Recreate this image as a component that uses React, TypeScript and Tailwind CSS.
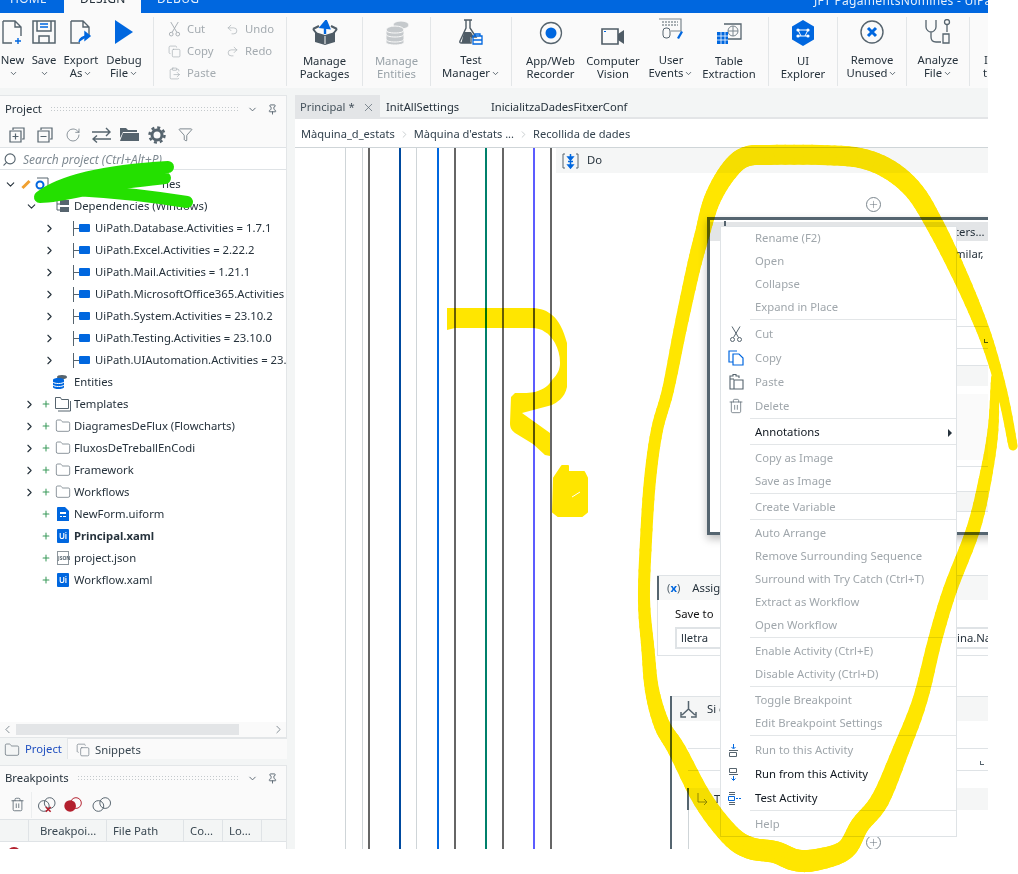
import { ChevronDown, ChevronRight, ChevronLeft, Pin, Plus, RotateCw, Search, X, Trash2, Undo2, Redo2, Copy, ClipboardPaste, Folder, Filter } from "lucide-react";
import type { ReactNode } from "react";

const Sep = () => <div className="w-px h-[69px] bg-[#e3e6e8] mt-[4px] shrink-0" />;

const IconDoc = ({ children }: { children?: ReactNode }) => (
  <svg width="24" height="26" viewBox="0 0 24 26" fill="none" stroke="#56646e" strokeWidth="1.4">
    <path d="M2 2h12l6 6v9M14 2v6h6M2 2v22h9" />
    {children}
  </svg>
);

const Scis = ({ color }: { color: string }) => (
  <svg width="14" height="16" viewBox="0 0 14 16" fill="none" stroke={color} strokeWidth="1">
    <path d="M3 .5l6.500 11M11 .5L4.500 11.500" />
    <circle cx="3.500" cy="13.500" r="2" />
    <circle cx="10.500" cy="13.500" r="2" />
  </svg>
);

const Dots = () => (
  <div className="flex-1 h-[6px] mx-[8px] bg-[radial-gradient(#c4c9cc_0.7px,transparent_0.8px)] bg-[length:3px_3px]" />
);

const Caret = () => <ChevronDown className="inline-block w-[9px] h-[9px] text-[#33424e] ml-[1px]" strokeWidth={2} />;

// big ribbon button, fixed width so the columns land where the screenshot has them
const BigButton = ({ w, icon, one, two, caret, off, top = "pt-[2px]" }: { w: string; icon: ReactNode; one: string; two?: string; caret?: boolean; off?: boolean; top?: string }) => (
  <div className={`${w} shrink-0 flex flex-col items-center ${top} ${off ? "text-[#9aa3a9]" : "text-[#26323c]"}`}>
    <div className="h-[34px] flex items-center justify-center">{icon}</div>
    <div className="text-[11.3px] leading-[13px] mt-[4px] text-center whitespace-nowrap">{one}</div>
    <div className="text-[11.3px] leading-[13px] text-center whitespace-nowrap h-[13px]">
      {two}
      {caret && <Caret />}
    </div>
  </div>
);

const SmallAction = ({ icon, label }: { icon: ReactNode; label: string }) => (
  <div className="h-[22px] flex items-center gap-[6px] text-[11.3px] text-[#a4abb0]">
    <span className="w-[13px] flex justify-center">{icon}</span>
    {label}
  </div>
);

const Ribbon = () => (
  <div className="h-[75px] bg-[#fafafa] flex shrink-0 overflow-hidden">
    <BigButton w="w-[25px]" one="New" caret icon={<IconDoc><path d="M17 19v6M14 22h6" stroke="#0067df" /></IconDoc>} />
    <BigButton w="w-[38px]" one="Save" caret icon={
      <svg width="24" height="24" viewBox="0 0 24 24" fill="none" stroke="#56646e" strokeWidth="1.5">
        <path d="M1 1h22v22H1zM5 1v10h14V1M7 23v-7h10v7" />
        <path d="M8 4h8M8 7h8" stroke="#0067df" />
      </svg>
    } />
    <BigButton w="w-[36px]" one="Export" two="As" caret icon={
      <IconDoc><path d="M10 23c1-5 4-6 9-6M16 13l5 4-5 4z" stroke="#0067df" fill="#0067df" /></IconDoc>
    } />
    <BigButton w="w-[50px]" one="Debug" two="File" caret icon={
      <svg width="20" height="24" viewBox="0 0 20 24"><path d="M1 0l18 12L1 24z" fill="#0067df" /></svg>
    } />
    <div className="w-[4px] shrink-0" />
    <Sep />
    <div className="w-[132px] shrink-0 grid grid-cols-[58px_1fr] pl-[14px] pt-[5px] content-start">
      <SmallAction label="Cut" icon={<Scis color="#a4abb0" />} />
      <SmallAction label="Undo" icon={<Undo2 className="w-[15px] h-[15px]" strokeWidth={1.2} />} />
      <SmallAction label="Copy" icon={<Copy className="w-[13px] h-[13px]" strokeWidth={1.2} />} />
      <SmallAction label="Redo" icon={<Redo2 className="w-[15px] h-[15px]" strokeWidth={1.2} />} />
      <SmallAction label="Paste" icon={<ClipboardPaste className="w-[13px] h-[13px]" strokeWidth={1.2} />} />
    </div>
    <Sep />
    <BigButton w="w-[75px]" top="pt-[3px]" one="Manage" two="Packages" icon={
      <svg width="26" height="26" viewBox="0 0 26 26" fill="none">
        <path d="M3 12l10 3 10-3v10l-10 3-10-3z" fill="#4f5c66" />
        <path d="M1 9l6-3M25 9l-6-3M1 9l4 5M25 9l-4 5" stroke="#4f5c66" strokeWidth="2" />
        <path d="M13 14V5M9 7l5-6 3 7z" stroke="#0067df" strokeWidth="2.4" fill="#0067df" />
        <path d="M13 16v8" stroke="#fafafa" />
      </svg>
    } />
    <Sep />
    <BigButton w="w-[67px]" top="pt-[3px]" off one="Manage" two="Entities" icon={
      <svg width="26" height="26" viewBox="0 0 26 26" fill="#c5c9cc" stroke="#fafafa" strokeWidth="1">
        <ellipse cx="17" cy="5" rx="8" ry="4" />
        <ellipse cx="11" cy="10" rx="9" ry="4" />
        <path d="M2 10v12c0 2 4 3 9 3s9-1 9-3V10c0 2-4 3-9 3s-9-1-9-3z" />
        <path d="M2 14c0 2 4 3 9 3s9-1 9-3M2 19c0 2 4 3 9 3s9-1 9-3" fill="none" />
      </svg>
    } />
    <Sep />
    <BigButton w="w-[80px]" one="Test" two="Manager" caret icon={
      <svg width="24" height="26" viewBox="0 0 24 26" fill="none">
        <path d="M5 1h8M7 1v8L1 22c-.5 1.500 0 2 1.500 2H12v-6h5l-6-9V1" stroke="#4f5c66" strokeWidth="1.4" />
        <path d="M5 13h7l3 5h-4v6H2.500z" fill="#4f5c66" />
        <path d="M14 17h9v8h-9zM16 17v-2h5v2M14 21h9" stroke="#0067df" strokeWidth="1.300" />
      </svg>
    } />
    <Sep />
    <BigButton w="w-[77px]" top="pt-[3px]" one="App/Web" two="Recorder" icon={
      <svg width="24" height="24" viewBox="0 0 24 24" fill="none">
        <circle cx="12" cy="12" r="10.500" stroke="#56646e" strokeWidth="1.3" />
        <circle cx="12" cy="12" r="5.500" fill="#0067df" />
      </svg>
    } />
    <BigButton w="w-[48px]" top="pt-[3px]" one="Computer" two="Vision" icon={
      <svg width="24" height="18" viewBox="0 0 24 18" className="mt-[8px]" fill="none">
        <path d="M1 1h16v15H1z" stroke="#4f5c66" strokeWidth="1.600" />
        <path d="M17 6l6-4v14l-6-4z" fill="#4f5c66" />
        <path d="M3 3h2v1H3z" fill="#0067df" />
      </svg>
    } />
    <BigButton w="w-[68px]" one="User" two="Events" caret icon={
      <svg width="26" height="22" viewBox="0 0 26 22" fill="none" className="-mt-[6px]">
        <path d="M1 1h22v12H13" stroke="#7b868e" strokeWidth="1.200" />
        <path d="M4 4h16M4 7h16" stroke="#8d969c" strokeWidth="1.500" strokeDasharray="2 1" />
        <rect x="5" y="10" width="7" height="10" rx="3" stroke="#56646e" fill="#fafafa" />
        <path d="M19 20l4-7 2 1-4 7z" fill="#0067df" />
      </svg>
    } />
    <BigButton w="w-[48px]" top="pt-[3px]" one="Table" two="Extraction" icon={
      <svg width="26" height="22" viewBox="0 0 26 22" fill="none" className="mt-[2px]">
        <path d="M8 1h17v15H12" stroke="#56646e" strokeWidth="1.300" />
        <circle cx="17" cy="8" r="5" stroke="#7b868e" />
        <path d="M12 8h10M17 3v10" stroke="#7b868e" />
        <path d="M1 9h11v12H1z" fill="#0067df" />
        <path d="M1 13h11M1 17h11M5 9v12M9 9v12" stroke="#fff" strokeWidth=".8" />
      </svg>
    } />
    <div className="w-[15px] shrink-0" />
    <Sep />
    <BigButton w="w-[68px]" top="pt-[3px]" one="UI" two="Explorer" icon={
      <svg width="24" height="26" viewBox="0 0 24 26">
        <path d="M12 0l11 6.500v13L12 26 1 19.500v-13z" fill="#0067df" />
        <path d="M7 10h10M7 16h10M7 10l3 6M17 10l-3 6" stroke="#fff" strokeWidth="1" />
        <circle cx="7" cy="10" r="1.600" fill="#fff" />
        <circle cx="17" cy="10" r="1.600" fill="#fff" />
        <circle cx="7" cy="16" r="1.600" fill="#fff" />
        <circle cx="17" cy="16" r="1.600" fill="#fff" />
      </svg>
    } />
    <Sep />
    <BigButton w="w-[68px]" one="Remove" two="Unused" caret icon={
      <svg width="24" height="24" viewBox="0 0 24 24" fill="none">
        <circle cx="12" cy="12" r="11" stroke="#56646e" strokeWidth="1.400" />
        <path d="M8 8l8 8M16 8l-8 8" stroke="#0067df" strokeWidth="3" />
      </svg>
    } />
    <Sep />
    <BigButton w="w-[62px]" one="Analyze" two="File" caret icon={
      <svg width="26" height="26" viewBox="0 0 26 26" fill="none" stroke="#56646e" strokeWidth="1.300">
        <path d="M1 1v7c0 3 3 5 5 5s5-2 5-5V1M6 13v5c0 3 2 5 5 5h5" />
        <circle cx="22" cy="3" r="2.500" />
        <path d="M22 6v7M18 15h6v9h-6z" />
      </svg>
    } />
    <Sep />
    <div className="pl-[13px] pt-[40px] text-[11.3px] leading-[13px] text-[#26323c]">
      <div className="pl-[1px]">I</div>
      <div>t</div>
    </div>
  </div>
);

const Blue = () => (
  <span className="flex items-center w-[22px] shrink-0">
    <span className="w-px h-[15px] bg-[#56646e]" />
    <span className="w-[5px] h-px bg-[#56646e]" />
    <span className="w-[11px] h-[8px] rounded-[1px] bg-[#0067df]" />
  </span>
);

const FolderIcon = () => <Folder className="w-[16px] h-[16px] text-[#56646e]" strokeWidth={1} />;

const UiFile = ({ label = "Ui" }: { label?: string }) => (
  <span className="w-[12px] h-[14px] rounded-[1px] bg-[#0067df] text-white text-[8px] leading-[14px] text-center font-semibold">{label}</span>
);

const Row = ({ closed, icon, text, bold }: { closed?: boolean; icon?: ReactNode; text: string; bold?: boolean }) => (
  <div className="h-[22px] flex items-center pl-[22px] whitespace-nowrap">
    <span className="w-[14px] shrink-0 flex justify-center">
      {closed && <ChevronRight className="w-[13px] h-[13px] text-[#26323c]" strokeWidth={2} />}
    </span>
    <span className="w-[19px] shrink-0 flex items-center justify-center">
      <Plus className="w-[10px] h-[10px] text-[#3b9a5b]" strokeWidth={2.500} />
    </span>
    <span className="w-[16px] shrink-0 flex items-center justify-center">{icon}</span>
    <span className={`pl-[3px] text-[11.3px] text-[#26323c] ${bold ? "font-bold" : ""}`}>{text}</span>
  </div>
);

const Dep = ({ text }: { text: string }) => (
  <div className="h-[22px] w-[286px] overflow-hidden flex items-center pl-[43px] whitespace-nowrap">
    <span className="w-[30px] shrink-0">
      <ChevronRight className="w-[13px] h-[13px] text-[#26323c]" strokeWidth={2} />
    </span>
    <Blue />
    <span className="text-[11.3px] text-[#26323c]">{text}</span>
  </div>
);

const ToolCell = ({ children }: { children: ReactNode }) => (
  <span className="w-[28px] flex justify-center shrink-0">{children}</span>
);

const ProjectPanel = () => (
  <div className="w-[287px] shrink-0 flex flex-col">
    <div className="h-[643px] bg-white border-t border-r border-[#e3e6e8] flex flex-col">
      <div className="h-[26px] bg-[#fafafa] flex items-center pl-[5px] pr-[8px] shrink-0">
        <span className="text-[11.3px] text-[#26323c]">Project</span>
        <Dots />
        <ChevronDown className="w-[11px] h-[11px] text-[#56646e] mr-[9px]" />
        <Pin className="w-[11px] h-[11px] text-[#56646e]" />
      </div>
      <div className="h-[26px] bg-[#fafafa] flex items-center pl-[3px] shrink-0 border-b border-[#dfe3e6] text-[#56646e]">
        <ToolCell><svg width="16" height="16" viewBox="0 0 16 16" fill="none" stroke="currentColor" strokeWidth="1.200"><path d="M4 3V1h11v11h-2M1 4h11v11H1zM6.500 6.500v6M3.500 9.500h6" /></svg></ToolCell>
        <ToolCell><svg width="16" height="16" viewBox="0 0 16 16" fill="none" stroke="currentColor" strokeWidth="1.200"><path d="M4 3V1h11v11h-2M1 4h11v11H1zM3.500 9.500h6" /></svg></ToolCell>
        <ToolCell><RotateCw className="w-[16px] h-[16px]" strokeWidth={1} /></ToolCell>
        <ToolCell>
          <svg width="19" height="16" viewBox="0 0 19 16" fill="none" stroke="currentColor" strokeWidth="1.400">
            <path d="M0 5h18M14 1l4 4-4 4" />
            <path d="M19 12H1M5 8.500L1 12l4 3.500" />
          </svg>
        </ToolCell>
        <ToolCell>
          <svg width="19" height="15" viewBox="0 0 19 15" fill="currentColor">
            <path d="M0 1h6l2 2h9v2H3L0 11zM0 14l3-8h16v8z" />
          </svg>
        </ToolCell>
        <ToolCell>
          <svg width="18" height="18" viewBox="0 0 18 18" fill="none" stroke="currentColor">
            <circle cx="9" cy="9" r="5" strokeWidth="3" />
            <circle cx="9" cy="9" r="7.500" strokeWidth="2.500" strokeDasharray="3 2.890" />
          </svg>
        </ToolCell>
        <ToolCell><Filter className="w-[15px] h-[15px]" strokeWidth={1.200} /></ToolCell>
      </div>
      <div className="h-[22px] flex items-center pl-[2px] pt-[2px] gap-[6px] shrink-0 border-b border-[#dfe3e6] bg-white">
        <Search className="w-[15px] h-[15px] text-[#56646e] -scale-x-100" strokeWidth={1.800} />
        <span className="text-[12px] italic text-[#7f8a92]">Search project (Ctrl+Alt+P)</span>
      </div>
      <div className="flex-1 overflow-hidden pt-[3px]">
        <div className="h-[22px] flex items-center pl-[4px] whitespace-nowrap">
          <ChevronDown className="w-[13px] h-[13px] text-[#26323c]" strokeWidth={2} />
          <span className="ml-[4px] w-[10px] h-[3px] bg-[#f0a030] -rotate-45" />
          <svg width="16" height="14" viewBox="0 0 16 14" fill="none" className="ml-[3px]">
            <path d="M3 1h11v11" stroke="#56646e" />
            <circle cx="6" cy="8" r="3.500" stroke="#0067df" strokeWidth="2" />
          </svg>
          <span className="ml-[112px] text-[11.3px] text-[#26323c]">nes</span>
        </div>
        <div className="h-[22px] flex items-center pl-[25px] whitespace-nowrap">
          <ChevronDown className="w-[13px] h-[13px] text-[#26323c]" strokeWidth={2} />
          <svg width="16" height="14" viewBox="0 0 16 14" className="ml-[16px]" fill="none">
            <path d="M3 1v10h4M3 5h4" stroke="#56646e" />
            <path d="M6 1h9v5H6z M6 8h9v5H6z" fill="#56646e" />
          </svg>
          <span className="pl-[4px] text-[11.3px] text-[#26323c]">Dependencies (Windows)</span>
        </div>
        <Dep text="UiPath.Database.Activities = 1.7.1" />
        <Dep text="UiPath.Excel.Activities = 2.22.2" />
        <Dep text="UiPath.Mail.Activities = 1.21.1" />
        <Dep text="UiPath.MicrosoftOffice365.Activities" />
        <Dep text="UiPath.System.Activities = 23.10.2" />
        <Dep text="UiPath.Testing.Activities = 23.10.0" />
        <Dep text="UiPath.UIAutomation.Activities = 23.10.3" />
        <div className="h-[22px] flex items-center pl-[52px] whitespace-nowrap">
          <svg width="16" height="16" viewBox="0 0 16 16" fill="none">
            <ellipse cx="10" cy="3" rx="5" ry="2" fill="#56646e" />
            <path d="M1 6c0-1.500 3-2 5.500-2s5.500.5 5.500 2v7c0 1.500-3 2-5.500 2S1 14.500 1 13z" fill="#0067df" />
            <path d="M1 8c1 2 10 2 11 0M1 11c1 2 10 2 11 0" stroke="#fff" />
          </svg>
          <span className="pl-[6px] text-[11.3px] text-[#26323c]">Entities</span>
        </div>
        <Row closed icon={<svg width="16" height="15" viewBox="0 0 16 15" fill="none" stroke="#56646e"><path d="M.5.500h5l1 2h7v9H.500zM15.500 4v10H3" /></svg>} text="Templates" />
        <Row closed icon={<FolderIcon />} text="DiagramesDeFlux (Flowcharts)" />
        <Row closed icon={<FolderIcon />} text="FluxosDeTreballEnCodi" />
        <Row closed icon={<FolderIcon />} text="Framework" />
        <Row closed icon={<FolderIcon />} text="Workflows" />
        <Row icon={<svg width="12" height="14" viewBox="0 0 12 14"><path d="M0 1a1 1 0 011-1h7l4 4v10H0z" fill="#0067df" /><path d="M3 5h6v2H3zM3 9h2v1H3zM6 9h3v1H6z" fill="#fff" /></svg>} text="NewForm.uiform" />
        <Row icon={<UiFile />} text="Principal.xaml" bold />
        <Row icon={<span className="w-[12px] h-[14px] border border-[#8d969c] text-[5px] leading-[12px] font-bold text-center text-[#56646e]">JSON</span>} text="project.json" />
        <Row icon={<UiFile />} text="Workflow.xaml" />
      </div>
      <div className="h-[16px] bg-[#fafafa] flex items-center shrink-0 border-b border-[#e3e6e8] text-[#56646e]">
        <ChevronLeft className="w-[13px] h-[13px] ml-[1px]" strokeWidth={1.300} />
        <div className="w-[223px] h-[11px] bg-[#e3e5e7] ml-[2px]" />
        <ChevronRight className="w-[13px] h-[13px] ml-[33px]" strokeWidth={1.300} />
      </div>
    </div>
    <div className="h-[21px] flex items-stretch shrink-0 text-[11.3px]">
      <div className="w-[67px] flex items-center gap-[5px] pl-[4px] pt-[2px] bg-[#f3f5f5] text-[#1f4fc0]">
        <Folder className="w-[16px] h-[16px] text-[#56646e]" strokeWidth={1} />
        Project
      </div>
      <div className="flex-1 bg-[#fafafa] border-l border-t border-[#e3e6e8] flex items-center gap-[5px] pl-[8px] pt-[2px] text-[#3a4852]">
        <Copy className="w-[14px] h-[14px] text-[#56646e]" strokeWidth={1} />
        Snippets
      </div>
    </div>
    <div className="mt-[6px] flex-1 border-t border-r border-[#e3e6e8] bg-[#fafafa] flex flex-col overflow-hidden">
      <div className="h-[24px] flex items-center pl-[5px] pr-[8px] shrink-0">
        <span className="text-[11.3px] text-[#26323c]">Breakpoints</span>
        <Dots />
        <ChevronDown className="w-[11px] h-[11px] text-[#56646e] mr-[9px]" />
        <Pin className="w-[11px] h-[11px] text-[#56646e]" />
      </div>
      <div className="h-[29px] flex items-center pl-[10px] shrink-0">
        <Trash2 className="w-[15px] h-[15px] text-[#56646e]" strokeWidth={1.300} />
        <div className="w-px h-[26px] bg-[#eceeef] ml-[6px] mr-[6px]" />
        <svg width="74" height="16" viewBox="0 0 76 16" fill="none">
          <circle cx="6" cy="9" r="5.500" stroke="#56646e" />
          <circle cx="12" cy="6" r="5.500" stroke="#56646e" />
          <path d="M8 10l5 5M13 10l-5 5" stroke="#b3202e" strokeWidth="1.600" />
          <circle cx="39" cy="6" r="5.500" stroke="#b3202e" />
          <circle cx="33" cy="9" r="6" fill="#b3202e" />
          <circle cx="62" cy="9" r="5.500" stroke="#56646e" />
          <circle cx="69" cy="6" r="5.500" stroke="#56646e" />
        </svg>
      </div>
      <div className="h-[23px] flex text-[11.3px] text-[#3a4852] border-t border-b border-[#dfe3e6] bg-[#f3f5f5] shrink-0">
        <div className="w-[29px] border-r border-[#dfe3e6]" />
        <div className="w-[78px] border-r border-[#dfe3e6] pl-[11px] leading-[21px]">Breakpoi...</div>
        <div className="w-[77px] border-r border-[#dfe3e6] pl-[6px] leading-[21px]">File Path</div>
        <div className="w-[39px] border-r border-[#dfe3e6] pl-[6px] leading-[21px]">Co...</div>
        <div className="w-[39px] border-r border-[#dfe3e6] pl-[6px] leading-[21px]">Lo...</div>
        <div className="flex-1" />
      </div>
      <div className="flex-1 bg-white pl-[7px]">
        <div className="w-[14px] h-[14px] rounded-full bg-[#b3202e] mt-[5px]" />
      </div>
    </div>
  </div>
);

const CanvasLines = () => (
  <>
    <div className="absolute left-[50px] top-0 bottom-0 w-px bg-[#cfd5d8]" />
    <div className="absolute left-[67px] top-0 bottom-0 w-px bg-[#cfd5d8]" />
    <div className="absolute left-[73px] top-0 bottom-0 w-[2px] bg-[#666666]" />
    <div className="absolute left-[104px] top-0 bottom-0 w-[2px] bg-[#004a9f]" />
    <div className="absolute left-[121px] top-0 bottom-0 w-px bg-[#cfd5d8]" />
    <div className="absolute left-[142px] top-0 bottom-0 w-[2px] bg-[#0067df]" />
    <div className="absolute left-[159px] top-0 bottom-0 w-[2px] bg-[#666666]" />
    <div className="absolute left-[190px] top-0 bottom-0 w-[2px] bg-[#00806b]" />
    <div className="absolute left-[207px] top-0 bottom-0 w-[2px] bg-[#666666]" />
    <div className="absolute left-[238px] top-0 bottom-0 w-[2px] bg-[#5c5cff]" />
    <div className="absolute left-[255px] top-0 bottom-0 w-[2px] bg-[#666666]" />
  </>
);

const AddButton = ({ pos }: { pos: string }) => (
  <div className={`absolute ${pos} w-[15px] h-[15px] rounded-full border border-[#7b868e] flex items-center justify-center bg-white`}>
    <Plus className="w-[11px] h-[11px] text-[#6b767e]" strokeWidth={1.200} />
  </div>
);

const Canvas = () => (
  <div className="relative flex-1 bg-white overflow-hidden text-[11.3px] text-[#26323c]">
    <CanvasLines />
    {/* Do header */}
    <div className="absolute left-[261px] top-0 right-0 h-[25px] bg-[#f5f6f6] flex items-center pl-[6px] gap-[8px]">
      <svg width="17" height="16" viewBox="0 0 17 16" fill="none">
        <path d="M3 1H1v14h2M14 1h2v14h-2" stroke="#56646e" />
        <path d="M8.500 1v5M6 4l2.500 3L11 4zM8.500 9v5M6 12l2.500 3 2.500-3zM6 8.500h5" stroke="#0067df" fill="#0067df" strokeWidth="1.500" />
      </svg>
      Do
    </div>
    <AddButton pos="left-[571px] top-[49px]" />
    {/* sequence card behind the menu */}
    <div className="absolute left-[412px] top-[69px] w-[400px] h-[318px] border-[3px] border-[#556570] shadow-[0_4px_8px_rgba(0,0,0,0.25)] bg-white">
      <div className="mt-[2px] h-[19px] bg-[#e3e5e7] pl-[245px] leading-[19px] whitespace-nowrap relative">
        <span className="absolute left-[14px] -top-[1px] w-[2px] h-[6px] bg-[#56646e]" />
        ters...
      </div>
      <div className="pl-[245px] mt-[5px] whitespace-nowrap">milar, </div>
      <div className="absolute left-[240px] right-0 top-[106px] h-[23px] border-t border-b border-[#dfe3e6]">
        <span className="absolute left-[34px] top-[12px] w-[4px] h-[4px] border-l border-b border-[#56646e]" />
      </div>
      <div className="absolute left-[240px] right-0 top-[145px] h-[21px] bg-[#f5f6f6] border-t border-[#dfe3e6]" />
      <div className="absolute left-[240px] right-0 top-[174px] h-[66px] bg-[#fafafa]" />
      <div className="absolute left-[240px] right-0 top-[246px] h-[25px] border-t border-[#dfe3e6]" />
      <div className="absolute left-[240px] right-0 top-[271px] h-[21px] bg-[#f5f6f6] border-t border-b border-[#dfe3e6]" />
    </div>
    {/* assign */}
    <div className="absolute left-[362px] top-[427px] w-[400px] h-[81px] border border-[#dfe3e6]">
      <div className="h-[24px] bg-[#f6f7f7] border-l-[2px] border-[#556570] -ml-px flex items-center pl-[8px] gap-[12px] whitespace-nowrap">
        <span className="text-[#56646e]">(<b className="text-[#0067df]">x</b>)</span>
        Assign
      </div>
      <div className="pl-[17px] mt-[6px] text-[#111]">Save to</div>
      <div className="ml-[17px] mt-[4px] h-[22px] border-2 border-[#dfe3e6] pl-[4px] leading-[18px] flex whitespace-nowrap">
        <span className="w-[276px]">lletra</span>
        <span>ina.Na</span>
      </div>
    </div>
    {/* si */}
    <div className="absolute left-[375px] top-[548px] w-[400px] h-[160px] border-l-[2px] border-[#556570]">
      <div className="h-[25px] bg-[#f5f6f6] border-t border-[#dfe3e6] flex items-center pl-[8px] gap-[10px] whitespace-nowrap">
        <svg width="17" height="17" viewBox="0 0 17 17" fill="none" stroke="#56646e" strokeWidth="1.500">
          <path d="M8.500 0v8M8.500 8L2 14M8.500 8L15 14M1 11v5h5M16 11v5h-5" />
        </svg>
        Si c
      </div>
      <div className="absolute left-[16px] right-0 top-[52px] h-[23px] border-t border-b border-[#dfe3e6]">
        <span className="absolute left-[292px] top-[12px] w-[4px] h-[4px] border-l border-b border-[#56646e]" />
      </div>
      <div className="absolute left-[16px] top-[92px] bottom-0 w-px bg-[#cfd5d8]" />
      <div className="absolute left-[15px] top-[92px] right-0 h-[22px] bg-[#f5f6f6] border-l-[2px] border-[#556570] flex items-center pl-[8px] gap-[6px]">
        <svg width="11" height="14" viewBox="0 0 11 14" fill="none" stroke="#8d969c"><path d="M1 1v9h9M7 7l3 3-3 3" /></svg>
        T
      </div>
    </div>
    <AddButton pos="left-[571px] top-[687px]" />
  </div>
);

const DocArea = () => (
  <div className="flex-1 flex flex-col min-w-0">
    <div className="h-[22px] flex items-center text-[11.2px] text-[#26323c] shrink-0 whitespace-nowrap">
      <div className="w-[85px] h-[22px] bg-[#e3e5e7] flex items-center pl-[5px] pt-[2px] text-[#45525c]">
        Principal *
        <X className="w-[13px] h-[13px] ml-[7px] text-[#56646e]" strokeWidth={1.300} />
      </div>
      <span className="pl-[6px] pt-[2px] w-[111px]">InitAllSettings</span>
      <span className="pt-[2px]">InicialitzaDadesFitxerConf</span>
    </div>
    <div className="h-[2px] bg-[#e3e5e7] shrink-0" />
    <div className="h-[29px] bg-white flex items-center pl-[6px] pt-[2px] text-[11.1px] text-[#33424e] shrink-0 whitespace-nowrap border-b border-[#cfd5d8]">
      Màquina_d_estats
      <ChevronRight className="w-[11px] h-[11px] mx-[4px] text-[#c5cacd]" strokeWidth={2} />
      Màquina d'estats ...
      <ChevronRight className="w-[11px] h-[11px] mx-[4px] text-[#c5cacd]" strokeWidth={2} />
      Recollida de dades
    </div>
    <Canvas />
  </div>
);

const MenuSep = () => <div className="h-px bg-[#e3e6e8] ml-[29px] mb-[2px]" />;

const MenuItem = ({ text, icon, tall, on, arrow }: { text: string; icon?: ReactNode; tall?: boolean; on?: boolean; arrow?: boolean }) => (
  <div className={`${tall ? "h-[24px]" : "h-[23px]"} flex items-center text-[11.3px] whitespace-nowrap ${on ? "text-[#111820]" : "text-[#a0a7ac]"}`}>
    <span className="w-[30px] mr-[4px] flex justify-center shrink-0">{icon}</span>
    <span className="flex-1">{text}</span>
    {arrow && <span className="w-0 h-0 mr-[4px] border-y-[4px] border-y-transparent border-l-[4px] border-l-[#26323c]" />}
  </div>
);

const ContextMenu = () => (
  <div className="absolute left-[720px] top-[226px] w-[237px] bg-white border border-[#dfe3e6] z-10">
    <MenuItem text="Rename (F2)" />
    <MenuItem text="Open" />
    <MenuItem text="Collapse" />
    <MenuItem text="Expand in Place" />
    <MenuSep />
    <MenuItem tall text="Cut" icon={<Scis color="#56646e" />} />
    <MenuItem tall text="Copy" icon={<svg width="16" height="16" viewBox="0 0 16 16" fill="none" stroke="#0067df" strokeWidth="1.200"><path d="M9 1H1v11h4M5 4h6l4 4v7H5z" /></svg>} />
    <MenuItem tall text="Paste" icon={<svg width="15" height="16" viewBox="0 0 15 16" fill="none" stroke="#56646e" strokeWidth="1.100"><path d="M5 5H1V2h3V.500h3V2h3v2M5 15H1V5M5 6h9v9H5z" /></svg>} />
    <MenuItem tall text="Delete" icon={<Trash2 className="w-[16px] h-[16px] text-[#56646e]" strokeWidth={1.100} />} />
    <MenuSep />
    <MenuItem on arrow text="Annotations" />
    <MenuSep />
    <MenuItem text="Copy as Image" />
    <MenuItem text="Save as Image" />
    <MenuSep />
    <MenuItem text="Create Variable" />
    <MenuSep />
    <MenuItem text="Auto Arrange" />
    <MenuItem text="Remove Surrounding Sequence" />
    <MenuItem text="Surround with Try Catch (Ctrl+T)" />
    <MenuItem text="Extract as Workflow" />
    <MenuItem text="Open Workflow" />
    <MenuSep />
    <MenuItem text="Enable Activity (Ctrl+E)" />
    <MenuItem text="Disable Activity (Ctrl+D)" />
    <MenuSep />
    <MenuItem text="Toggle Breakpoint" />
    <MenuItem text="Edit Breakpoint Settings" />
    <MenuSep />
    <MenuItem tall text="Run to this Activity" icon={<svg width="9" height="13" viewBox="0 0 9 13" fill="none" className="-ml-[6px]"><path d="M4.500 0v4M2.500 3l2 2 2-2" stroke="#0067df" /><path d="M.5 8.500h7v4h-7zM0 6.500h9" stroke="#56646e" /></svg>} />
    <MenuItem tall on text="Run from this Activity" icon={<svg width="9" height="13" viewBox="0 0 9 13" fill="none" className="-ml-[6px]"><path d="M.5.500h7v4h-7zM0 6.500h9" stroke="#56646e" /><path d="M4.500 8v4M2.500 10.500l2 2 2-2" stroke="#0067df" /></svg>} />
    <MenuItem tall on text="Test Activity" icon={<svg width="13" height="13" viewBox="0 0 13 13" fill="none" className="-ml-[3px]"><path d="M1 .500h6M1 2.500h6M1 10.500h6M1 12.500h6" stroke="#56646e" /><path d="M.5 4.500h6v4h-6z" stroke="#0067df" /><path d="M8 6.500h5" stroke="#0067df" strokeDasharray="2 1" /></svg>} />
    <MenuSep />
    <MenuItem text="Help" />
  </div>
);

// x, y, pen width along the big highlighter loop
const loop: number[][] = [
  [1013, 446, 9], [1004, 400, 10], [990, 350, 12], [975, 310, 14], [955, 265, 16], [935, 225, 18], [915, 192, 19],
  [890, 170, 20], [860, 158, 20], [820, 155, 20], [770, 155, 20], [745, 157, 20], [728, 172, 19], [712, 200, 17],
  [702, 235, 15], [693, 270, 14], [680, 330, 13], [668, 390, 12], [657, 430, 12], [650, 480, 12], [646, 540, 12],
  [644, 600, 12], [648, 650, 13], [652, 690, 14], [662, 725, 16], [677, 750, 18], [703, 800, 20], [730, 835, 21],
  [750, 848, 22], [775, 852, 22], [795, 860, 22], [815, 860, 22], [845, 850, 20], [860, 825, 19], [880, 800, 19],
  [901, 750, 17], [920, 700, 15], [935, 640, 14], [950, 590, 14], [973, 530, 14], [985, 480, 13], [993, 430, 11],
  [995, 378, 8],
];

// catmull-rom through the points, so the width can change along the stroke
const smooth = (pts: number[][]) => {
  const out: number[][] = [];
  for (let i = 0; i < pts.length - 1; i++) {
    const a = pts[Math.max(i - 1, 0)];
    const b = pts[i];
    const c = pts[i + 1];
    const d = pts[Math.min(i + 2, pts.length - 1)];
    for (let s = 0; s < 6; s++) {
      const t = s / 6;
      const at = (k: number) =>
        0.5 * (2 * b[k] + (c[k] - a[k]) * t + (2 * a[k] - 5 * b[k] + 4 * c[k] - d[k]) * t * t + (3 * b[k] - a[k] - 3 * c[k] + d[k]) * t * t * t);
      out.push([at(0), at(1), b[2] + (c[2] - b[2]) * t]);
    }
  }
  out.push(pts[pts.length - 1]);
  return out;
};

const loopPoints = smooth(loop);

// highlighter marks drawn over the screenshot
const Scribbles = () => (
  <>
    <svg width="1018" height="874" viewBox="0 0 1018 874" fill="none" className="absolute left-0 top-0 z-20 mix-blend-multiply pointer-events-none">
      {loopPoints.slice(1).map((p, i) => (
        <line key={i} x1={loopPoints[i][0]} y1={loopPoints[i][1]} x2={p[0]} y2={p[1]} stroke="#ffe600" strokeWidth={p[2]} strokeLinecap="round" />
      ))}
      <path d="M447 308L533 308C548 309 560 316 567 343L567 387C565 398 556 403 552 405L522 413L550 433L550 456L545 455L533 444L515 433C511 430 510 427 510 423L511 397L515 393C524 393 530 393 535 392C545 389 549 385 552 380C558 374 560 369 560 363C560 355 558 349 555 343C552 338 549 334 545 332C541 329 537 328 532 328L455 328L447 330Z" fill="#ffe600" />
      <path d="M554 478L562 466L568 466L568 472L584 472L587 478L587 512L582 516L558 516L553 512Z" fill="#ffe600" stroke="#ffe600" strokeWidth="2" strokeLinejoin="round" />
    </svg>
    <svg width="1018" height="874" viewBox="0 0 1018 874" fill="none" className="absolute left-0 top-0 z-20 pointer-events-none">
      <path d="M168 167C115 170 65 178 40 197C70 197 110 180 165 178C125 183 95 186 75 190C110 192 150 196 187 202" stroke="#24e000" strokeWidth="12" strokeLinecap="round" strokeLinejoin="round" />
      <path d="M572 497L580 492" stroke="#fff" strokeWidth="1" />
    </svg>
  </>
);

export default function App() {
  return (
    <div className="relative w-[1018px] h-[874px] bg-white overflow-hidden font-['Noto_Sans',sans-serif]">
      <div className="w-[988px] h-[849px] overflow-hidden flex flex-col bg-[#f3f5f5]">
        <div className="h-[13px] bg-[#0067df] flex items-start text-[12px] text-white/90 tracking-wide shrink-0 overflow-hidden whitespace-nowrap">
          <span className="w-[64px] pl-[10px] -mt-[10px]">HOME</span>
          <span className="w-[77px] h-[13px] bg-[#fafafa] text-[#26323c] pl-[16px]"><span className="block -mt-[10px]">DESIGN</span></span>
          <span className="pl-[16px] -mt-[10px]">DEBUG</span>
          <span className="ml-auto w-[174px] -mt-[8px]">JFT PagamentsNomines - UiPath</span>
        </div>
        <Ribbon />
        <div className="flex-1 flex pt-[7px] gap-[8px] min-h-0">
          <ProjectPanel />
          <DocArea />
        </div>
      </div>
      <ContextMenu />
      <Scribbles />
    </div>
  );
}
